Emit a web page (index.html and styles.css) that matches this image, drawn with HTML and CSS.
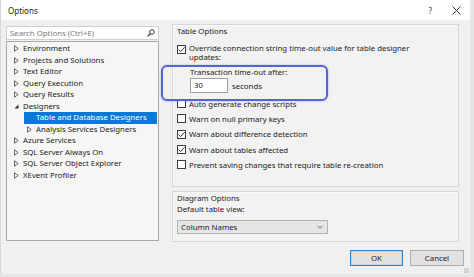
FILE: index.html
```html
<!DOCTYPE html>
<html>
<head>
<meta charset="utf-8">
<link rel="stylesheet" href="styles.css">
</head>
<body>
<div class="win">
  <div class="titlebar">
    <span class="title">Options</span>
    <span class="tb-btns"><span class="help">?</span><svg class="close" width="9" height="9" viewBox="0 0 9 9"><path d="M0.5 0.5 L8.5 8.5 M8.5 0.5 L0.5 8.5" stroke="#222" stroke-width="0.9" fill="none"/></svg></span>
  </div>
  <div class="main">
    <div class="left">
      <div class="search">
        <span class="ph">Search Options (Ctrl+E)</span>
        <svg class="mag" width="8" height="8" viewBox="0 0 8 8"><circle cx="5" cy="3" r="2.3" stroke="#333" stroke-width="1" fill="none"/><path d="M3.3 4.7 L0.6 7.4" stroke="#333" stroke-width="1.3"/></svg>
      </div>
      <div class="tree">
        <div class="row"><span class="exp"><svg width="5" height="7" viewBox="0 0 5 7"><path d="M0.5 0.8 L4.2 3.5 L0.5 6.2 Z" fill="none" stroke="#444" stroke-width="0.8"/></svg></span>Environment</div>
        <div class="row"><span class="exp"><svg width="5" height="7" viewBox="0 0 5 7"><path d="M0.5 0.8 L4.2 3.5 L0.5 6.2 Z" fill="none" stroke="#444" stroke-width="0.8"/></svg></span>Projects and Solutions</div>
        <div class="row"><span class="exp"><svg width="5" height="7" viewBox="0 0 5 7"><path d="M0.5 0.8 L4.2 3.5 L0.5 6.2 Z" fill="none" stroke="#444" stroke-width="0.8"/></svg></span>Text Editor</div>
        <div class="row"><span class="exp"><svg width="5" height="7" viewBox="0 0 5 7"><path d="M0.5 0.8 L4.2 3.5 L0.5 6.2 Z" fill="none" stroke="#444" stroke-width="0.8"/></svg></span>Query Execution</div>
        <div class="row"><span class="exp"><svg width="5" height="7" viewBox="0 0 5 7"><path d="M0.5 0.8 L4.2 3.5 L0.5 6.2 Z" fill="none" stroke="#444" stroke-width="0.8"/></svg></span>Query Results</div>
        <div class="row"><span class="exp"><svg width="5" height="7" viewBox="0 0 5 7"><path d="M4.5 1.5 L4.5 5.5 L0.5 5.5 Z" fill="#333"/></svg></span>Designers</div>
        <div class="row child sel">Table and Database Designers</div>
        <div class="row child"><span class="exp sub"><svg width="5" height="7" viewBox="0 0 5 7"><path d="M0.5 0.8 L4.2 3.5 L0.5 6.2 Z" fill="none" stroke="#444" stroke-width="0.8"/></svg></span>Analysis Services Designers</div>
        <div class="row"><span class="exp"><svg width="5" height="7" viewBox="0 0 5 7"><path d="M0.5 0.8 L4.2 3.5 L0.5 6.2 Z" fill="none" stroke="#444" stroke-width="0.8"/></svg></span>Azure Services</div>
        <div class="row"><span class="exp"><svg width="5" height="7" viewBox="0 0 5 7"><path d="M0.5 0.8 L4.2 3.5 L0.5 6.2 Z" fill="none" stroke="#444" stroke-width="0.8"/></svg></span>SQL Server Always On</div>
        <div class="row"><span class="exp"><svg width="5" height="7" viewBox="0 0 5 7"><path d="M0.5 0.8 L4.2 3.5 L0.5 6.2 Z" fill="none" stroke="#444" stroke-width="0.8"/></svg></span>SQL Server Object Explorer</div>
        <div class="row"><span class="exp"><svg width="5" height="7" viewBox="0 0 5 7"><path d="M0.5 0.8 L4.2 3.5 L0.5 6.2 Z" fill="none" stroke="#444" stroke-width="0.8"/></svg></span>XEvent Profiler</div>
      </div>
    </div>
    <div class="right">
      <div class="group g1">
        <div class="gtitle">Table Options</div>
        <div class="chk first"><span class="box on"><svg width="9" height="9" viewBox="0 0 9 9"><path d="M1.6 4.6 L3.6 6.6 L7.6 2.2" fill="none" stroke="#222" stroke-width="0.9"/></svg></span><span class="lbl wrap">Override connection string time-out value for table designer<br>updates:</span></div>
        <div class="sub-block">
          <div class="sublbl">Transaction time-out after:</div>
          <div class="tline"><span class="input">30</span><span class="sec">seconds</span></div>
        </div>
        <div class="chk"><span class="box"></span><span class="lbl">Auto generate change scripts</span></div>
        <div class="chk"><span class="box"></span><span class="lbl">Warn on null primary keys</span></div>
        <div class="chk"><span class="box on"><svg width="9" height="9" viewBox="0 0 9 9"><path d="M1.6 4.6 L3.6 6.6 L7.6 2.2" fill="none" stroke="#222" stroke-width="0.9"/></svg></span><span class="lbl">Warn about difference detection</span></div>
        <div class="chk"><span class="box on"><svg width="9" height="9" viewBox="0 0 9 9"><path d="M1.6 4.6 L3.6 6.6 L7.6 2.2" fill="none" stroke="#222" stroke-width="0.9"/></svg></span><span class="lbl">Warn about tables affected</span></div>
        <div class="chk"><span class="box"></span><span class="lbl">Prevent saving changes that require table re-creation</span></div>
      </div>
      <div class="group g2">
        <div class="gtitle">Diagram Options</div>
        <div class="dlbl">Default table view:</div>
        <div class="combo"><span>Column Names</span><svg width="6" height="4" viewBox="0 0 6 4"><path d="M0.5 0.7 L3 3.2 L5.5 0.7" fill="none" stroke="#555" stroke-width="0.8"/></svg></div>
      </div>
    </div>
  </div>
  <div class="footer">
    <div class="btn ok">OK</div>
    <div class="btn">Cancel</div>
  </div>
  <div class="annot"></div>
  <div class="grip"></div>
</div>
</body>
</html>
```

FILE: styles.css
```css
* { box-sizing: border-box; }
html, body { margin: 0; padding: 0; }
body {
  width: 474px;
  height: 277px;
  overflow: hidden;
  background: #e6e6e6;
  font-family: "Noto Sans", "Open Sans", sans-serif;
  font-size: 7.8px;
  color: #1b1b1b;
}
.win {
  position: relative;
  width: 470px;
  height: 274px;
  background: #f0f0f0;
  border-left: 1px solid #d8d8d8;
  display: flex;
  flex-direction: column;
}
.titlebar {
  height: 20px;
  background: #ffffff;
  display: flex;
  align-items: center;
  justify-content: space-between;
  padding: 0 9px 0 7px;
}
.title { font-size: 8px; color: #222; }
.tb-btns { display: flex; align-items: center; gap: 20px; }
.help { font-size: 8px; color: #333; }
.close { display: block; }
.main {
  display: flex;
  padding: 4px 0 0 5px;
  gap: 13px;
  height: 222px;
}
.left {
  width: 153px;
  display: flex;
  flex-direction: column;
  gap: 1px;
  padding-top: 2px;
}
.search {
  height: 14px;
  background: #ffffff;
  border: 1px solid #cfcfcf;
  display: flex;
  align-items: center;
  justify-content: space-between;
  padding: 0 3px 0 3px;
}
.ph { color: #7a7a7a; }
.mag { display: block; }
.tree {
  height: 200px;
  background: #f6f6f4;
  border: 1px solid #a9a9a9;
  padding: 1px 1px 0 1px;
}
.row {
  height: 11.5px;
  line-height: 11.5px;
  display: flex;
  align-items: center;
  padding-left: 15px;
  white-space: nowrap;
}
.row .exp {
  width: 8px;
  margin-left: -9px;
  margin-right: 1px;
  display: flex;
  align-items: center;
}
.row .exp svg { display: block; }
.row.child { padding-left: 28px; }
.row.sel {
  background: #0a78d6;
  color: #ffffff;
  margin-left: 16px;
  padding-left: 12px;
}
.right {
  width: 287px;
  display: flex;
  flex-direction: column;
  gap: 4px;
}
.group {
  border: 1px solid #d6d6d6;
  box-shadow: inset 1px 1px 0 #fafafa;
  background: #f2f2f2;
  padding: 1px 4px 0 4px;
}
.g1 { height: 163px; }
.g2 { height: 51px; }
.gtitle { height: 11px; line-height: 11px; }
.chk {
  display: flex;
  align-items: center;
  height: 15.3px;
}
.chk.first {
  align-items: flex-start;
  height: auto;
  margin-top: 7px;
}
.box {
  width: 9px;
  height: 9px;
  border: 1px solid #3a3a3a;
  background: #ffffff;
  flex: none;
  margin-right: 3px;
  position: relative;
}
.chk.first .box { margin-top: 1px; }
.box svg { display: block; margin: -1px 0 0 -1px; }
.lbl { white-space: nowrap; }
.lbl.wrap { line-height: 8.5px; }
.sub-block {
  margin: 6px 0 3px 13px;
}
.sublbl { height: 10px; line-height: 10px; }
.tline {
  display: flex;
  align-items: center;
  margin-top: 1px;
  gap: 4px;
}
.input {
  width: 38px;
  height: 15px;
  background: #ffffff;
  border: 1px solid #a0a0a0;
  padding-left: 3px;
  line-height: 13px;
}
.dlbl { height: 10px; line-height: 10px; margin-top: 0px; }
.combo {
  margin-top: 6px;
  width: 151px;
  height: 14px;
  background: #e5e5e5;
  border: 1px solid #b3b3b3;
  display: flex;
  align-items: center;
  justify-content: space-between;
  padding: 0 4px 0 3px;
}
.combo svg { display: block; }
.footer {
  display: flex;
  justify-content: flex-end;
  gap: 7px;
  padding: 8px 6px 0 0;
}
.btn {
  width: 54px;
  height: 16px;
  background: #e1e1e1;
  border: 1px solid #adadad;
  display: flex;
  align-items: center;
  justify-content: center;
}
.btn.ok {
  width: 53px;
  border: 1px solid #2b7fd4;
  box-shadow: inset 0 0 0 1px #bcd6f0;
}
.annot {
  position: absolute;
  left: 160px;
  top: 65px;
  width: 167px;
  height: 36px;
  border: 2px solid #5462dc;
  border-radius: 6px;
  box-shadow: 0 0 2px rgba(84, 98, 220, 0.5);
}
.grip {
  position: absolute;
  right: 1px;
  bottom: 1px;
  width: 5px;
  height: 5px;
  background: radial-gradient(circle, #b0b0b0 0.6px, transparent 0.8px) 0 0 / 2px 2px;
}
```
